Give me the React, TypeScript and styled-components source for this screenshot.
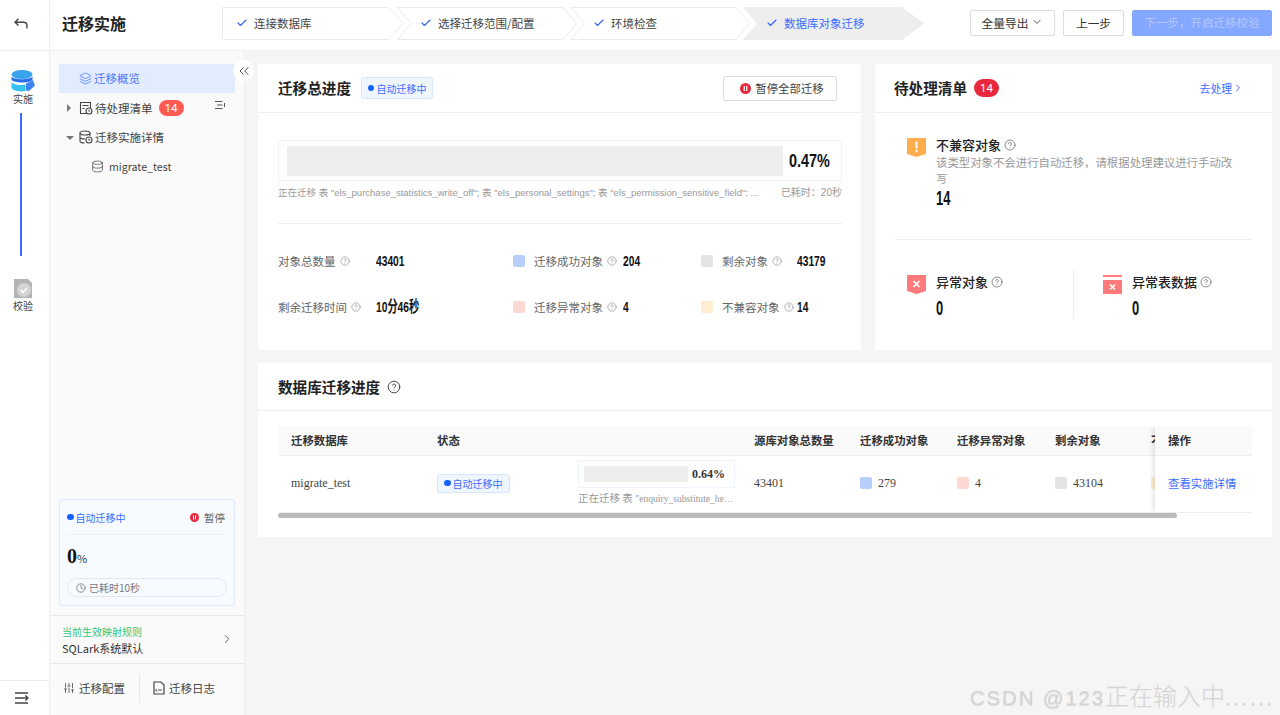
import React from "react";
import styled, { createGlobalStyle } from "styled-components";
import { Check, ChevronDown, ChevronRight, ChevronsLeft, CircleHelp, Clock, Database, Layers, SlidersVertical } from "lucide-react";

const SANS = `"Noto Sans CJK SC", "Noto Sans", sans-serif`;
const SERIF = `"Liberation Serif", "Noto Sans CJK SC", serif`;
const NUM = `"Liberation Sans", "Noto Sans CJK SC", sans-serif`;

const Global = createGlobalStyle`
  html, body { margin: 0; padding: 0; background: #f5f5f5; }
  * { box-sizing: border-box; }
  #root { width: 1280px; height: 715px; overflow: hidden; font-family: ${SANS}; color: #333; }
`;

const Page = styled.div`position: relative; width: 1280px; height: 715px; display: flex; flex-direction: column; overflow: hidden;`;
const Header = styled.header`height: 51px; flex: none; display: flex; align-items: center; background: #fff; border-bottom: 1px solid #eee;`;
const BackBox = styled.div`width: 50px; height: 50px; display: flex; align-items: center; justify-content: center; border-right: 1px solid #eee; padding: 0 8px 4px 0;`;
const PageTitle = styled.h1`margin: -4px 0 0 12px; width: 160px; font-size: 16px; line-height: 24px; font-weight: 700; color: #222;`;
const Steps = styled.div`display: flex; width: 702px; height: 33px; margin-top: -4px;`;
const StepItem = styled.div<{ $w: number; $first?: boolean; $active?: boolean }>`
  position: relative; width: ${(p) => p.$w}px; height: 33px; flex: none;
  margin-left: ${(p) => (p.$first ? 0 : -7)}px;
  padding-left: ${(p) => (p.$first ? 14 : 23)}px;
  display: flex; align-items: center; gap: 6px;
  font-size: 11.5px; color: ${(p) => (p.$active ? "#3b6cff" : "#444")};
  svg.shape { position: absolute; left: 0; top: 0; }
  svg.tick, span { position: relative; }
`;
const Actions = styled.div`margin-left: 46px; display: flex; gap: 8px; margin-top: -4px;`;
const HeadButton = styled.button<{ $w: number; $primary?: boolean }>`
  width: ${(p) => p.$w}px; height: 26px; padding: 0 0 2px; display: flex; align-items: center; justify-content: center; gap: 3px;
  font-family: ${SANS}; font-size: ${(p) => (p.$primary ? 11.5 : 11.7)}px; border-radius: 2px;
  background: ${(p) => (p.$primary ? "#84a7ff" : "#fff")};
  color: ${(p) => (p.$primary ? "#b4c9ff" : "#333")};
  border: 1px solid ${(p) => (p.$primary ? "#84a7ff" : "#ddd")};
`;
const Body = styled.div`flex: 1; display: flex; min-height: 0;`;
const Rail = styled.nav`width: 50px; flex: none; background: #fff; border-right: 1px solid #eee; display: flex; flex-direction: column; align-items: center; padding-top: 19px; padding-right: 3px;`;
const RailLabel = styled.div`font-size: 10px; line-height: 14px; color: #444; margin-top: -1px;`;
const RailLine = styled.div`width: 2px; height: 143px; background: #3b6cff; margin: 7px 4px 23px 0;`;
const RailFoot = styled.div`margin-top: auto; width: 49px; margin-right: -3px; height: 35px; border-top: 1px solid #e8e8e8; display: flex; align-items: center; justify-content: center; padding-right: 5px;`;
const Side = styled.aside`position: relative; width: 195px; flex: none; background: #fafafa; border-right: 1px solid #eee; display: flex; flex-direction: column;`;
const Tree = styled.div`padding: 13px 9px 0; flex: 1;`;
const TreeRow = styled.div<{ $active?: boolean; $indent?: number }>`
  height: 29.4px; display: flex; align-items: center; position: relative; font-size: 11.5px; padding-bottom: 1px;
  padding-left: ${(p) => p.$indent ?? 20}px; gap: 2px;
  background: ${(p) => (p.$active ? "#e3ecff" : "transparent")};
  color: ${(p) => (p.$active ? "#4a78ff" : "#444")};
`;
const TreeMono = styled.span`margin-left: 3px; font-size: 10.6px;`;
const Caret = styled.span<{ $down?: boolean }>`
  position: absolute; left: ${(p) => (p.$down ? 7 : 8)}px; top: ${(p) => (p.$down ? 13 : 11)}px; width: 0; height: 0;
  ${(p) => p.$down ? "border-left: 4px solid transparent; border-right: 4px solid transparent; border-top: 4px solid #777;" : "border-top: 4px solid transparent; border-bottom: 4px solid transparent; border-left: 4px solid #777;"}
`;
const Count = styled.span<{ $bg: string; $h?: number; $ml: number }>`
  display: inline-flex; align-items: center; justify-content: center; width: 25px; height: ${(p) => p.$h ?? 16}px; margin-left: ${(p) => p.$ml}px; border-radius: 9px; background: ${(p) => p.$bg}; color: #fff; font-size: 11.5px; font-family: "Roboto", sans-serif;
`;
const TreeExtra = styled.span`position: absolute; right: 10px; top: 8px; display: flex;`;
const StatusCard = styled.div`margin: 0 9px 9px; height: 107px; background: #f7faff; border: 1px solid #dde8ff; border-radius: 3px; padding: 0 7px;`;
const StatusTop = styled.div`height: 35px; display: flex; align-items: center; justify-content: space-between; border-bottom: 1px solid #eaeef5; font-size: 10.5px;`;
const LiveText = styled.span`display: inline-flex; align-items: center; gap: 1px; color: #3b6cff; font-size: 10px;
  &::before { content: ""; width: 6.5px; height: 6.5px; border-radius: 50%; background: #1463ff; margin-right: 1px; }`;
const PauseLink = styled.span`display: inline-flex; align-items: center; gap: 5px; color: #666; font-size: 10.5px; padding-right: 2px;`;
const Percent = styled.div`font-family: ${SERIF}; font-weight: 700; font-size: 20px; line-height: 24px; margin-top: 9px; color: #111; small { font-family: ${SANS}; font-weight: 400; font-size: 11px; color: #333; }`;
const Elapsed = styled.div`height: 19px; margin-top: 8px; border: 1px solid #e2e8f2; border-radius: 10px; display: flex; align-items: center; gap: 3px; padding-left: 8px; font-size: 10px; color: #777;`;
const Rule = styled.div`height: 48px; border-top: 1px solid #e8e8e8; padding: 8px 13px 0 12px; position: relative; font-size: 11px; line-height: 16px; color: #333;`;
const RuleTitle = styled.div`color: #2fc77f; font-size: 10px;`;
const RuleArrow = styled.span`position: absolute; right: 10px; top: 16px; display: flex;`;
const SideFoot = styled.div`height: 52px; padding-bottom: 3px; border-top: 1px solid #e8e8e8; display: flex; align-items: center; font-size: 11.5px; color: #444;`;
const FootItem = styled.div<{ $w: number; $line?: boolean }>`width: ${(p) => p.$w}px; height: 29px; display: flex; align-items: center; padding-left: 13px; gap: 4px; ${(p) => p.$line && "border-right: 1px solid #e8e8e8;"}`;
const Collapse = styled.div`position: absolute; right: -10px; top: 9px; width: 21px; height: 21px; border-radius: 50%; background: #fff; display: flex; align-items: center; justify-content: center; z-index: 2;`;
const Main = styled.main`flex: 1; padding: 13px 8px 0 13px; display: flex; flex-direction: column; gap: 13px; min-width: 0;`;
const TopRow = styled.div`display: flex; gap: 14px;`;
const Card = styled.section<{ $w?: number; $h: number }>`${(p) => (p.$w ? `width: ${p.$w}px;` : "")} height: ${(p) => p.$h}px; background: #fff; flex: none;`;
const CardHead = styled.div<{ $left?: number; $right?: number }>`height: 49px; display: flex; align-items: center; padding: 0 ${(p) => p.$right ?? 24}px 0 ${(p) => p.$left ?? 20}px; border-bottom: 1px solid #eee;`;
const CardTitle = styled.h2`margin: 0; font-size: 14.6px; font-weight: 700; color: #222; line-height: 22px;`;
const Tag = styled.span<{ $ml?: number; $h?: number }>`display: inline-flex; align-items: center; padding: 0 6px; height: ${(p) => p.$h ?? 22}px; margin-left: ${(p) => p.$ml ?? 0}px; font-family: ${SANS}; background: #f0f6ff; border: 1px solid #d9e6ff; border-radius: 2px;`;
const PauseButton = styled.button`margin-left: auto; width: 114px; height: 25px; background: #fff; border: 1px solid #ddd; border-radius: 2px; display: flex; align-items: center; justify-content: center; gap: 4px; font-family: ${SANS}; font-size: 11.4px; color: #444; padding: 0 0 0 4px;`;
const Overview = styled.div`padding: 27px 19px 0 20px;`;
const ProgressBox = styled.div<{ $h: number; $pad: number }>`height: ${(p) => p.$h}px; border: 1px solid #eef3ff; display: flex; align-items: center; padding: 0 ${(p) => p.$pad}px;`;
const Track = styled.div<{ $w: number; $h: number }>`width: ${(p) => p.$w}px; height: ${(p) => p.$h}px; background: #eee; flex: none; border-radius: 1px;`;
const BigPct = styled.span`display: inline-block; margin-left: 6px; font-family: ${NUM}; font-size: 19px; font-weight: 700; color: #111; transform: scaleX(.76); transform-origin: left center;`;
const Now = styled.div`display: flex; justify-content: space-between; margin-top: 4px; height: 16px; font-family: ${NUM}; font-size: 9.5px; line-height: 16px; color: #999; white-space: nowrap;`;
const NowElapsed = styled.span`font-size: 10px;`;
const Divider = styled.div`height: 1px; background: #eee; margin-top: 22px;`;
const Stats = styled.div`display: grid; grid-template-columns: 235px 188px 1fr; grid-auto-rows: 46px; margin-top: 14px;`;
const Stat = styled.div`display: flex; align-items: center; font-size: 11.5px; color: #666;`;
const Swatch = styled.span<{ $c: string; $gap?: number }>`flex: none; width: 12px; height: 12px; border-radius: 2px; background: ${(p) => p.$c}; margin-right: ${(p) => p.$gap ?? 9}px;`;
const StatLabel = styled.span<{ $w: number }>`display: inline-flex; align-items: center; gap: 4px; width: ${(p) => p.$w}px; flex: none; white-space: nowrap;`;
const Num = styled.span<{ $size?: number; $top?: number }>`display: inline-block; font-family: ${NUM}; font-weight: 700; font-size: ${(p) => p.$size ?? 15.5}px; color: #111; line-height: 1.1; white-space: nowrap; margin-top: ${(p) => p.$top ?? 0}px; transform: scaleX(.66); transform-origin: left center;`;
const GoLink = styled.a`margin-left: auto; display: inline-flex; align-items: center; font-size: 10.8px; color: #3b6cff;`;
const Pending = styled.div`display: flex; padding: 25px 20px 0 32px; gap: 10px; height: 126px;`;
const PendTitle = styled.div`display: flex; align-items: center; gap: 3px; margin-top: -2px; font-size: 13px; line-height: 18px; color: #222; font-weight: 500;`;
const PendDesc = styled.div`font-size: 11.4px; line-height: 16px; color: #999; width: 300px;`;
const Rule2 = styled.div`height: 1px; background: #eee; margin: 0 20px;`;
const Pair = styled.div`display: flex; padding: 30px 0 0; height: 80px;`;
const PairItem = styled.div<{ $w: number; $pad: number; $line?: boolean }>`width: ${(p) => p.$w}px; padding: 5px 0 0 ${(p) => p.$pad}px; display: flex; gap: 10px; height: 49px; ${(p) => p.$line && "border-right: 1px solid #eee;"}`;
const TableHead = styled.div`height: 48px; display: flex; align-items: center; gap: 7px; padding-left: 20px; border-bottom: 1px solid #eee;`;
const TableWrap = styled.div`position: relative; margin: 15px 20px 0; height: 87px; overflow: hidden;`;
const GridRow = styled.div<{ $head?: boolean }>`
  display: grid; grid-template-columns: 146px 141px 176px 106px 97px 98px 96px 4px; padding: 0 0 2px 13px; align-items: center;
  height: ${(p) => (p.$head ? 30 : 57)}px; border-bottom: 1px solid #eee;
  ${(p) => (p.$head ? "background: #fafafa; font-weight: 700; color: #333; font-size: 11.4px;" : "font-family: " + SERIF + "; font-size: 12px; color: #444;")}
`;
const Cell = styled.div`display: flex; align-items: center; white-space: nowrap; overflow: hidden;`;
const ProgCell = styled.div`display: flex; flex-direction: column;`;
const MiniBox = styled.div`width: 157px; height: 28px; border: 1px solid #eef3ff; display: flex; align-items: center; padding-left: 5px;`;
const MiniPct = styled.span`margin-left: 4px; font-family: ${SERIF}; font-weight: 700; font-size: 12px; color: #333;`;
const MiniNow = styled.div`font-size: 9.6px; line-height: 14px; margin-top: 3px; color: #999; font-family: ${SERIF}; white-space: nowrap; span { font-family: ${SANS}; font-size: 10.5px; }`;
const FixedCol = styled.div`position: absolute; right: 0; top: 0; width: 97px; height: 87px; background: #fff; box-shadow: -4px 0 5px -2px rgba(0,0,0,.12);`;
const FixedHead = styled.div`height: 30px; background: #fafafa; border-bottom: 1px solid #eee; display: flex; align-items: center; padding: 0 0 2px 13px; font-size: 11.4px; font-weight: 700; color: #333;`;
const FixedBody = styled.div`height: 57px; border-bottom: 1px solid #eee; display: flex; align-items: center; padding: 0 0 2px 13px; font-size: 11.4px; color: #3b6cff;`;
const ScrollBar = styled.div`margin: 0 0 0 20px; width: 899px; height: 5px; background: #bbb; border-radius: 3px;`;
const Watermark = styled.div`position: absolute; left: 970px; top: 680px; font-family: "Liberation Sans", sans-serif; font-size: 20.5px; line-height: 30px; letter-spacing: 1.8px; color: #d4d4d4; text-shadow: 0 1px 1px rgba(0,0,0,.1); white-space: nowrap;`;
const WatermarkCjk = styled.span`font-family: "Noto Sans CJK SC", sans-serif; font-weight: 300; font-size: 24px; letter-spacing: 0; text-shadow: 0 1px 0 rgba(0,0,0,.05);`;
const WatermarkDots = styled.span`letter-spacing: 2.6px;`;

const Help = ({ s = 10, c = "#888" }: { s?: number; c?: string }) => <CircleHelp size={s} color={c} strokeWidth={1.5} style={{ flex: "none" }} />;

const PauseDot = ({ s = 11 }: { s?: number }) => (
  <svg width={s} height={s} viewBox="0 0 12 12"><circle cx="6" cy="6" r="6" fill="#e8283c" /><rect x="4" y="3.2" width="1.3" height="5.6" fill="#fff" /><rect x="6.7" y="3.2" width="1.3" height="5.6" fill="#fff" /></svg>
);

const StepShape = ({ w, tip, notch, fill, line }: { w: number; tip: number; notch: number; fill: string; line: string }) => (
  <svg className="shape" width={w} height={33} viewBox={`0 0 ${w} 33`}>
    <path d={`M0.5 0.5 H${w - tip} L${w - 0.5} 16.5 L${w - tip} 32.5 H0.5 L${notch + 0.5} 16.5 Z`} fill={fill} stroke={line} />
  </svg>
);

const Tick = () => <Check className="tick" size={12} color="#2f62f5" strokeWidth={2.2} />;

const DbRailIcon = () => (
  <svg width="24" height="23" viewBox="0 0 24 23">
    <ellipse cx="11" cy="4.5" rx="10.5" ry="4.5" fill="#3aa3ee" />
    <path d="M0.5 6.5c2 3.6 18 3.6 21 0v3.5c-3 3.4-18.5 3.2-21 0z" fill="#2a6ef0" />
    <path d="M0.5 12c2 3 10 3.6 14 2.6V21C9 22 2.5 21 0.5 18z" fill="#35c2ee" />
    <path d="M15 13.5l7-3.5 2 5.5-6 5.5-3-.5z" fill="#2f7bf3" opacity=".92" />
  </svg>
);
const CheckRailIcon = () => (
  <svg width="21" height="21" viewBox="0 0 21 21">
    <path d="M1 0h14l4 4v15H1z" fill="#b4b4b4" />
    <circle cx="11" cy="11" r="7" fill="#d4d4d4" stroke="#c4c4c4" />
    <path d="M7.8 11l2.3 2.4 3.8-4.4" fill="none" stroke="#fff" strokeWidth="1.6" />
  </svg>
);
const Badge = ({ color, mark }: { color: string; mark: "warn" | "x" }) => (
  <svg width="19" height="19" viewBox="0 0 19 19" style={{ flex: "none" }}>
    <path d="M0 0h19v16l-9.5 3L0 16z" fill={color} />
    {mark === "warn"
      ? <g fill="#fff"><rect x="8.5" y="3.5" width="2" height="7" /><rect x="8.5" y="12" width="2" height="2.2" /></g>
      : <path d="M6.5 6l6 6M12.5 6l-6 6" stroke="#fff" strokeWidth="1.7" />}
  </svg>
);
const TableBadge = () => (
  <svg width="19" height="19" viewBox="0 0 19 19" style={{ flex: "none" }}>
    <rect x="0" y="0" width="19" height="2" fill="#ff7b7b" />
    <rect x="0" y="5" width="19" height="14" fill="#ff7b7b" />
    <path d="M7 9.5l5 5M12 9.5l-5 5" stroke="#fff" strokeWidth="1.5" />
  </svg>
);
const TaskIcon = ({ stacked }: { stacked?: boolean }) => (
  <svg width="14" height="14" viewBox="0 0 14 14" fill="none" stroke="#444" strokeWidth="1.1">
    {stacked
      ? <><ellipse cx="6" cy="3" rx="5" ry="2" /><path d="M1 3v8c0 1.2 2 2 4.5 2M11 3v3M1 7c0 1.2 2 2 5 2" /></>
      : <><path d="M7 12.5H1.5v-11h10V7" /><path d="M3.5 4.5h6M3.5 7.5h2" /></>}
    <circle cx="10" cy="10" r="3" fill="#fff" /><path d="M10 8.7V10h1.2" />
  </svg>
);
const ListIcon = () => (
  <svg width="10" height="8" viewBox="0 0 10 8" fill="none" stroke="#555" strokeWidth="1">
    <path d="M0 .5h7.5M2 4h5.5M0 7.5h7.5" /><path d="M9.5 2v4" />
  </svg>
);
const MenuIcon = () => (
  <svg width="14" height="12" viewBox="0 0 14 12" fill="none" stroke="#444" strokeWidth="1.3">
    <path d="M0 1h13M0 6h10M0 11h13" /><path d="M11 4l2 2-2 2z" fill="#444" />
  </svg>
);
const BackIcon = () => (
  <svg width="14" height="11" viewBox="0 0 14 11" fill="none" stroke="#444" strokeWidth="1.4">
    <path d="M4.5 .8L1 4.2l3.5 3.4" /><path d="M1 4.2h8.5c2.2 0 3.5 1.6 3.5 3.6v2.6" />
  </svg>
);
const LogIcon = () => (
  <svg width="12" height="14" viewBox="0 0 12 14" fill="none" stroke="#444" strokeWidth="1.2">
    <path d="M1 1h7l3 3v9H1z" /><path d="M3 8v2h1.4M6 8v2M8 8v2" strokeWidth=".9" />
  </svg>
);

export default function App() {
  return (
    <Page>
      <Global />
      <Header>
        <BackBox><BackIcon /></BackBox>
        <PageTitle>迁移实施</PageTitle>
        <Steps>
          <StepItem $w={182} $first><StepShape w={182} tip={16} notch={0} fill="#fff" line="#eaeaea" /><Tick /><span>连接数据库</span></StepItem>
          <StepItem $w={180}><StepShape w={180} tip={14} notch={14} fill="#fff" line="#eaeaea" /><Tick /><span>选择迁移范围/配置</span></StepItem>
          <StepItem $w={180}><StepShape w={180} tip={14} notch={14} fill="#fff" line="#eaeaea" /><Tick /><span>环境检查</span></StepItem>
          <StepItem $w={181} $active><StepShape w={181} tip={22} notch={14} fill="#eeeeee" line="#eeeeee" /><Tick /><span>数据库对象迁移</span></StepItem>
        </Steps>
        <Actions>
          <HeadButton $w={85}>全量导出<ChevronDown size={12} color="#555" /></HeadButton>
          <HeadButton $w={61}>上一步</HeadButton>
          <HeadButton $w={140} $primary>下一步，开启迁移校验</HeadButton>
        </Actions>
      </Header>
      <Body>
        <Rail>
          <DbRailIcon />
          <RailLabel>实施</RailLabel>
          <RailLine />
          <CheckRailIcon />
          <RailLabel>校验</RailLabel>
          <RailFoot><MenuIcon /></RailFoot>
        </Rail>
        <Side>
          <Collapse><ChevronsLeft size={16} color="#444" strokeWidth={1.4} /></Collapse>
          <Tree>
            <TreeRow $active><Layers size={13} color="#4a78ff" strokeWidth={1.4} /><span>迁移概览</span></TreeRow>
            <TreeRow><Caret /><TaskIcon /><span>待处理清单</span><Count $bg="#ff5a52" $ml={4}>14</Count><TreeExtra><ListIcon /></TreeExtra></TreeRow>
            <TreeRow><Caret $down /><TaskIcon stacked /><span>迁移实施详情</span></TreeRow>
            <TreeRow $indent={32}><Database size={13} color="#444" strokeWidth={1.3} /><TreeMono>migrate_test</TreeMono></TreeRow>
          </Tree>
          <StatusCard>
            <StatusTop><LiveText>自动迁移中</LiveText><PauseLink><PauseDot s={9} />暂停</PauseLink></StatusTop>
            <Percent>0<small>%</small></Percent>
            <Elapsed><Clock size={10} color="#777" />已耗时10秒</Elapsed>
          </StatusCard>
          <Rule>
            <RuleTitle>当前生效映射规则</RuleTitle>
            <div>SQLark系统默认</div>
            <RuleArrow><ChevronRight size={14} color="#444" strokeWidth={1.4} /></RuleArrow>
          </Rule>
          <SideFoot>
            <FootItem $w={90} $line><SlidersVertical size={12} color="#444" strokeWidth={1.6} />迁移配置</FootItem>
            <FootItem $w={100}><LogIcon />迁移日志</FootItem>
          </SideFoot>
        </Side>
        <Main>
          <TopRow>
            <Card $w={603} $h={286}>
              <CardHead>
                <CardTitle>迁移总进度</CardTitle>
                <Tag $ml={10}><LiveText>自动迁移中</LiveText></Tag>
                <PauseButton><PauseDot />暂停全部迁移</PauseButton>
              </CardHead>
              <Overview>
                <ProgressBox $h={41} $pad={8}><Track $w={496} $h={30} /><BigPct>0.47%</BigPct></ProgressBox>
                <Now><span>正在迁移 表 "els_purchase_statistics_write_off"; 表 "els_personal_settings"; 表 "els_permission_sensitive_field"; ...</span><NowElapsed>已耗时：20秒</NowElapsed></Now>
                <Divider />
                <Stats>
                  <Stat><StatLabel $w={98}>对象总数量<Help /></StatLabel><Num>43401</Num></Stat>
                  <Stat><Swatch $c="#b8cffc" /><StatLabel $w={89}>迁移成功对象<Help /></StatLabel><Num>204</Num></Stat>
                  <Stat><Swatch $c="#e3e3e3" /><StatLabel $w={75}>剩余对象<Help /></StatLabel><Num>43179</Num></Stat>
                  <Stat><StatLabel $w={98}>剩余迁移时间<Help /></StatLabel><Num>10分46秒</Num></Stat>
                  <Stat><Swatch $c="#fdd9d4" /><StatLabel $w={89}>迁移异常对象<Help /></StatLabel><Num>4</Num></Stat>
                  <Stat><Swatch $c="#fdeed2" /><StatLabel $w={75}>不兼容对象<Help /></StatLabel><Num>14</Num></Stat>
                </Stats>
              </Overview>
            </Card>
            <Card $w={397} $h={286}>
              <CardHead $left={19} $right={28}>
                <CardTitle>待处理清单</CardTitle>
                <Count $bg="#e8283c" $h={18} $ml={7}>14</Count>
                <GoLink>去处理<ChevronRight size={12} color="#3b6cff" /></GoLink>
              </CardHead>
              <Pending>
                <Badge color="#ffad4d" mark="warn" />
                <div>
                  <PendTitle>不兼容对象<Help s={12} c="#666" /></PendTitle>
                  <PendDesc>该类型对象不会进行自动迁移，请根据处理建议进行手动改写</PendDesc>
                  <Num $size={19.5}>14</Num>
                </div>
              </Pending>
              <Rule2 />
              <Pair>
                <PairItem $w={199} $pad={32} $line>
                  <Badge color="#ff7b7b" mark="x" />
                  <div><PendTitle>异常对象<Help s={12} c="#666" /></PendTitle><Num $size={19.5} $top={7}>0</Num></div>
                </PairItem>
                <PairItem $w={190} $pad={29}>
                  <TableBadge />
                  <div><PendTitle>异常表数据<Help s={12} c="#666" /></PendTitle><Num $size={19.5} $top={7}>0</Num></div>
                </PairItem>
              </Pair>
            </Card>
          </TopRow>
          <Card $h={174}>
            <TableHead><CardTitle>数据库迁移进度</CardTitle><Help s={14} c="#333" /></TableHead>
            <TableWrap>
              <GridRow $head>
                <Cell>迁移数据库</Cell><Cell>状态</Cell><Cell /><Cell>源库对象总数量</Cell><Cell>迁移成功对象</Cell><Cell>迁移异常对象</Cell><Cell>剩余对象</Cell><Cell>不兼容对象</Cell>
              </GridRow>
              <GridRow>
                <Cell>migrate_test</Cell>
                <Cell><Tag $h={19}><LiveText>自动迁移中</LiveText></Tag></Cell>
                <ProgCell>
                  <MiniBox><Track $w={104} $h={16} /><MiniPct>0.64%</MiniPct></MiniBox>
                  <MiniNow><span>正在迁移 表</span> "enquiry_substitute_he…</MiniNow>
                </ProgCell>
                <Cell>43401</Cell>
                <Cell><Swatch $c="#b8cffc" $gap={6} />279</Cell>
                <Cell><Swatch $c="#fdd9d4" $gap={6} />4</Cell>
                <Cell><Swatch $c="#e3e3e3" $gap={6} />43104</Cell>
                <Cell><Swatch $c="#fdeed2" $gap={6} />14</Cell>
              </GridRow>
              <FixedCol><FixedHead>操作</FixedHead><FixedBody>查看实施详情</FixedBody></FixedCol>
            </TableWrap>
            <ScrollBar />
          </Card>
        </Main>
      </Body>
      <Watermark>CSDN @123<WatermarkCjk>正在输入中</WatermarkCjk><WatermarkDots>......</WatermarkDots></Watermark>
    </Page>
  );
}
